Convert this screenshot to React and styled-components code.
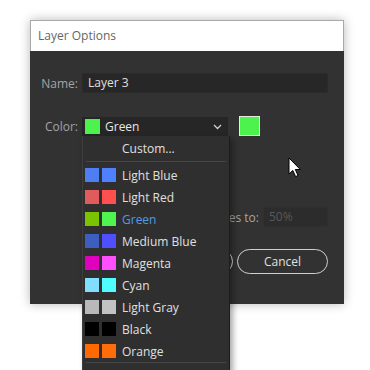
import React from 'react';
import styled, { createGlobalStyle } from 'styled-components';

const Global = createGlobalStyle`
    body{
        margin:0;
        background:#fff;
        font-family:"Open Sans", "Liberation Sans", sans-serif;
        font-size:12px;
    }
`
const Page = styled.div`
    padding:20px 0 0 30px;
    height:350px;
    overflow:hidden;
`
const Dialog = styled.div`
    position:relative;
    width:314px;
    height:284px;
    display:flex;
    flex-direction:column;
    box-shadow:0 0 10px rgba(0,0,0,0.28);
`
const TitleBar = styled.div`
    height:30px;
    line-height:30px;
    background:#fff;
    border:1px solid #a9a9a9;
    border-bottom:none;
    padding-left:7px;
    color:#666;
    font-size:12px;
`
const Body = styled.div`
    flex:1;
    background:#323232;
    padding:22px 16px 0 0;
    display:flex;
    flex-direction:column;
`
const Row = styled.div`
    display:flex;
    align-items:center;
    height:${p => p.h || 20}px;
    margin-top:${p => p.mt || 0}px;
    justify-content:${p => p.end ? 'flex-end' : 'flex-start'};
    gap:4px;
`
const Label = styled.span`
    width:${p => p.w ? p.w + 'px' : 'auto'};
    text-align:right;
    color:#a4a4a4;
    font-size:12px;
`
const Input = styled.div`
    flex:${p => p.grow ? 1 : 'none'};
    width:${p => p.w ? p.w + 'px' : 'auto'};
    height:20px;
    box-sizing:border-box;
    background:${p => p.dim ? '#2c2c2c' : '#272727'};
    border:1px solid ${p => p.dim ? '#2f2f2f' : '#2b2b2b'};
    color:${p => p.dim ? '#585858' : '#e0e0e0'};
    padding-left:5px;
    line-height:18px;
    font-size:12px;
`
const SelectWrap = styled.div`
    position:relative;
    width:146px;
    height:19px;
    align-self:flex-end;
`
const Select = styled.div`
    height:19px;
    background:#262626;
    display:flex;
    align-items:center;
    gap:5px;
    padding-left:3px;
    color:#e6e6e6;
    font-size:12px;
`
const Chevron = styled.svg`
    margin-left:auto;
    margin-right:6px;
`
const Swatch = styled.span`
    display:inline-block;
    width:${p => p.size}px;
    height:${p => p.size}px;
    background:${p => p.c};
    flex:none;
`
const BigSwatch = styled.span`
    margin-left:7px;
    width:19px;
    height:18px;
    background:#4df24d;
    border:1px solid #e8e8e8;
`
const Menu = styled.div`
    position:absolute;
    top:100%;
    left:0;
    width:146px;
    background:#2f2f2f;
    border-left:1px solid #3e3e3e;
    border-right:1px solid #1c1c1c;
    box-shadow:3px 3px 6px rgba(0,0,0,0.35);
    padding-bottom:12px;
    z-index:2;
`
const Custom = styled.div`
    height:25px;
    line-height:25px;
    padding-left:39px;
    color:#e0e0e0;
    font-size:12px;
`
const Sep = styled.div`
    height:1px;
    background:#464646;
    margin:0 3px 0 3px;
`
const List = styled.div`
    padding:2px 0 0;
`
const Item = styled.div`
    height:22px;
    display:flex;
    align-items:center;
    padding-left:2px;
    gap:3px;
    color:${p => p.active ? '#4d9be6' : '#e0e0e0'};
    font-size:12px;
    span:last-child{ margin-left:3px; }
`
const Button = styled.div`
    width:89px;
    height:23px;
    border:1px solid ${p => p.primary ? '#e0e0e0' : '#cfcfcf'};
    border-radius:13px;
    display:flex;
    align-items:center;
    justify-content:center;
    color:#e0e0e0;
    font-size:12px;
`
const Cursor = styled.svg`
    position:absolute;
    left:258px;
    top:137px;
    z-index:3;
`

const colors = [
    ['Light Blue', '#4f7ef2', '#4f80ff'],
    ['Light Red', '#e05c5c', '#ff4f4f'],
    ['Green', '#7bc300', '#4ff44f', true],
    ['Medium Blue', '#3d5dbf', '#4f4fff'],
    ['Magenta', '#e000c0', '#ff4fff'],
    ['Cyan', '#80dfff', '#4ffcff'],
    ['Light Gray', '#b9b9b9', '#c2c2c2'],
    ['Black', '#000', '#000'],
    ['Orange', '#ff6a00', '#ff6c0a'],
]

const App = () => {
    return (
        <Page>
            <Global />
            <Dialog>
                <TitleBar>Layer Options</TitleBar>
                <Body>
                    <Row>
                        <Label w={48}>Name:</Label>
                        <Input grow>Layer 3</Input>
                    </Row>
                    <Row mt={23}>
                        <Label w={48}>Color:</Label>
                        <SelectWrap>
                            <Select>
                                <Swatch size={15} c="#4df24d" />
                                Green
                                <Chevron width="9" height="6" viewBox="0 0 9 6">
                                    <path d="M1 1 L4.5 4.5 L8 1" fill="none" stroke="#cfcfcf" strokeWidth="1.3" />
                                </Chevron>
                            </Select>
                            <Menu>
                                <Custom>Custom...</Custom>
                                <Sep />
                                <List>
                                    {colors.map(([name, a, b, active]) => (
                                        <Item key={name} active={active}>
                                            <Swatch size={14} c={a} />
                                            <Swatch size={14} c={b} />
                                            <span>{name}</span>
                                        </Item>
                                    ))}
                                </List>
                                <Sep />
                            </Menu>
                        </SelectWrap>
                        <BigSwatch />
                    </Row>
                    <Row mt={71} end>
                        <Label>Dim Images to:</Label>
                        <Input w={65} dim>50%</Input>
                    </Row>
                    <Row mt={22} h={25} end>
                        <Button primary>OK</Button>
                        <Button>Cancel</Button>
                    </Row>
                </Body>
                <Cursor width="14" height="21" viewBox="0 0 14 21">
                    <path d="M1 1 L1 17 L4.8 13.4 L7.6 19.6 L10 18.5 L7.3 12.5 L12.3 12.5 Z" fill="#fff" stroke="#000" strokeWidth="1" />
                </Cursor>
            </Dialog>
        </Page>
    )
}

export default App
